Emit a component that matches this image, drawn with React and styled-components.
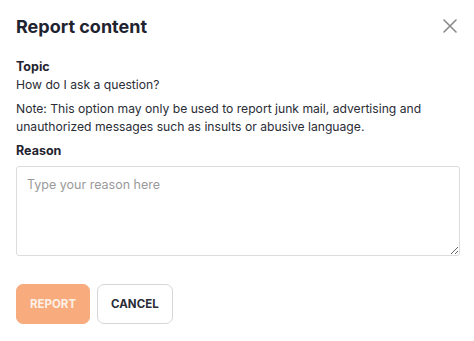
import React from 'react';
import styled, { createGlobalStyle } from 'styled-components';

const GlobalStyle = createGlobalStyle`
  body {
    margin: 0;
    background: #ffffff;
    font-family: Inter, "Open Sans", sans-serif;
    color: #1f2330;
  }
`;

const Dialog = styled.div`
  width: 474px;
  height: 341px;
  box-sizing: border-box;
  padding: 13px 14px 0 16px;
  display: flex;
  flex-direction: column;
`;

const Header = styled.div`
  display: flex;
  align-items: center;
  justify-content: space-between;
  height: 26px;
  margin-bottom: 19px;
`;

const Title = styled.h2`
  margin: 0;
  font-size: 18px;
  font-weight: 700;
  color: #1f2330;
`;

const CloseButton = styled.button`
  border: none;
  background: none;
  padding: 0;
  margin-right: 2px;
  width: 16px;
  height: 16px;
  display: flex;
  align-items: center;
  justify-content: center;
  cursor: pointer;
`;

const Label = styled.div`
  font-size: 12.5px;
  font-weight: 700;
  line-height: 18px;
`;

const Text = styled.p`
  margin: 0 0 ${p => p.$gap || 0}px 0;
  font-size: 12.15px;
  line-height: 18px;
  color: #2a2d36;
`;

const Reason = styled.textarea`
  margin-top: 6px;
  height: 90px;
  box-sizing: border-box;
  width: 100%;
  border: 1px solid #dcdcdc;
  border-radius: 3px;
  padding: 10px 10px;
  font-family: inherit;
  font-size: 12.5px;
  color: #2a2d36;
  resize: vertical;
  &::placeholder {
    color: #9a9a9a;
  }
`;

const Actions = styled.div`
  display: flex;
  gap: 7px;
  margin-top: 28px;
`;

const Button = styled.button`
  height: 40px;
  padding: 0 13px;
  border-radius: 7px;
  font-family: inherit;
  font-size: 11.5px;
  font-weight: 700;
  border: 1px solid ${p => (p.$primary ? '#f8ab7c' : '#d6d6d6')};
  background: ${p => (p.$primary ? '#f8ab7c' : '#ffffff')};
  color: ${p => (p.$primary ? '#fdf0e6' : '#2a2d36')};
  cursor: pointer;
`;

export default function App() {
  return (
    <>
      <GlobalStyle />
      <Dialog>
        <Header>
          <Title>Report content</Title>
          <CloseButton aria-label="Close">
            <svg width="14" height="14" viewBox="0 0 14 14">
              <path d="M1 1L13 13M13 1L1 13" stroke="#8a8a8a" strokeWidth="1.6" strokeLinecap="round" />
            </svg>
          </CloseButton>
        </Header>
        <Label>Topic</Label>
        <Text $gap={6}>How do I ask a question?</Text>
        <Text $gap={6}>
          Note: This option may only be used to report junk mail, advertising and
          unauthorized messages such as insults or abusive language.
        </Text>
        <Label>Reason</Label>
        <Reason placeholder="Type your reason here" />
        <Actions>
          <Button $primary>REPORT</Button>
          <Button>CANCEL</Button>
        </Actions>
      </Dialog>
    </>
  );
}
